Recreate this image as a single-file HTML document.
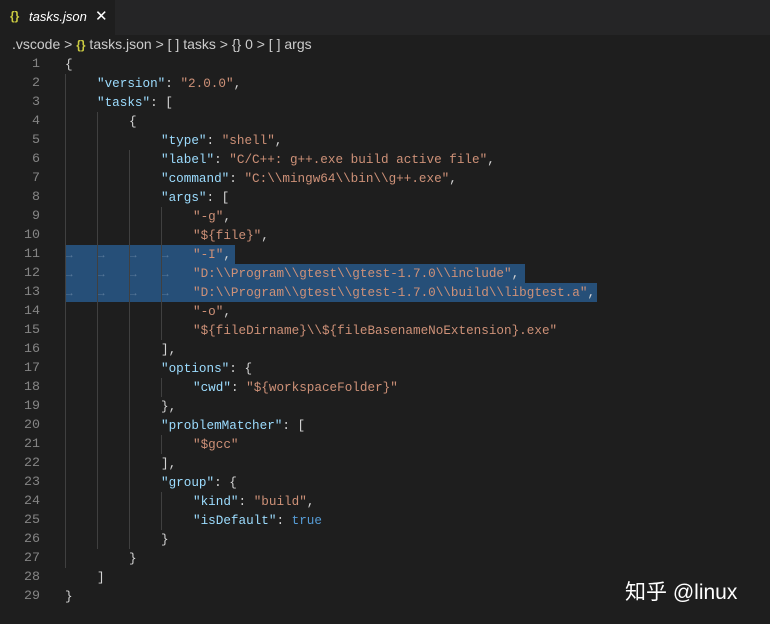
<!DOCTYPE html>
<html><head><meta charset="utf-8"><style>
body{margin:0;width:770px;height:624px;background:#1e1e1e;overflow:hidden;position:relative;font-family:"Liberation Mono",monospace}
.tabbar{position:absolute;left:0;top:0;width:770px;height:35px;background:#252526}
.tab{position:absolute;left:0;top:0;width:115px;height:35px;background:#1e1e1e;font-family:"Liberation Sans",sans-serif;font-size:13px;color:#fff;font-style:italic}
.bc{position:absolute;left:12px;top:36px;font-family:"Liberation Sans",sans-serif;font-size:14px;color:#ccc;white-space:pre}
.ln{position:absolute;left:0;width:40px;text-align:right;color:#858585;font-size:13.33px;line-height:19px}
.code{position:absolute;left:65px;top:55px;font-size:12.65px;line-height:19px;color:#d4d4d4}
.code div{height:19px;white-space:pre}
.i1{padding-left:32px}.i2{padding-left:64px}.i3{padding-left:96px}.i4{padding-left:128px}
.k{color:#9cdcfe}.s{color:#ce9178}.b{color:#569cd6}
.g{position:absolute;width:1px;background:#404040}
.sel{position:absolute;background:#264f78}
.ar{position:absolute;color:#5a7a9a;font-size:11px}
.wm{position:absolute;left:625px;top:576px;font-family:"Liberation Sans","Noto Sans CJK SC",sans-serif;font-size:21px;color:#fff}
</style></head><body>
<div class="tabbar"><div class="tab"><span style="position:absolute;left:10px;top:9px;color:#cbcb41;font-style:normal;font-weight:bold;font-size:12px">{}</span><span style="position:absolute;left:29px;top:9px">tasks.json</span><span style="position:absolute;left:95px;top:7px;font-style:normal;font-size:15px">✕</span></div></div>
<div class="bc">.vscode &gt; <span style="color:#cbcb41;font-weight:bold;font-size:12px">{}</span> tasks.json &gt; [ ] tasks &gt; {} 0 &gt; [ ] args</div>
<div class="sel" style="left:65px;top:245px;width:170px;height:19px"></div>
<div class="sel" style="left:65px;top:264px;width:460px;height:19px"></div>
<div class="sel" style="left:65px;top:283px;width:532px;height:19px"></div>
<div class="g" style="left:65px;top:74px;height:494px"></div>
<div class="g" style="left:97px;top:112px;height:437px"></div>
<div class="g" style="left:129px;top:150px;height:399px"></div>
<div class="g" style="left:161px;top:207px;height:133px"></div>
<div class="g" style="left:161px;top:378px;height:19px"></div>
<div class="g" style="left:161px;top:435px;height:19px"></div>
<div class="g" style="left:161px;top:492px;height:38px"></div>
<div class="ar" style="left:66px;top:247px;line-height:19px">→<br>→<br>→</div>
<div class="ar" style="left:98px;top:247px;line-height:19px">→<br>→<br>→</div>
<div class="ar" style="left:130px;top:247px;line-height:19px">→<br>→<br>→</div>
<div class="ar" style="left:162px;top:247px;line-height:19px">→<br>→<br>→</div>
<div class="ln" style="top:55px">1<br>2<br>3<br>4<br>5<br>6<br>7<br>8<br>9<br>10<br>11<br>12<br>13<br>14<br>15<br>16<br>17<br>18<br>19<br>20<br>21<br>22<br>23<br>24<br>25<br>26<br>27<br>28<br>29</div>
<div class="code"><div>{</div><div class="i1"><span class="k">"version"</span>: <span class="s">"2.0.0"</span>,</div><div class="i1"><span class="k">"tasks"</span>: [</div><div class="i2">{</div><div class="i3"><span class="k">"type"</span>: <span class="s">"shell"</span>,</div><div class="i3"><span class="k">"label"</span>: <span class="s">"C/C++: g++.exe build active file"</span>,</div><div class="i3"><span class="k">"command"</span>: <span class="s">"C:\\mingw64\\bin\\g++.exe"</span>,</div><div class="i3"><span class="k">"args"</span>: [</div><div class="i4"><span class="s">"-g"</span>,</div><div class="i4"><span class="s">"${file}"</span>,</div><div class="i4"><span class="s">"-I"</span>,</div><div class="i4"><span class="s">"D:\\Program\\gtest\\gtest-1.7.0\\include"</span>,</div><div class="i4"><span class="s">"D:\\Program\\gtest\\gtest-1.7.0\\build\\libgtest.a"</span>,</div><div class="i4"><span class="s">"-o"</span>,</div><div class="i4"><span class="s">"${fileDirname}\\${fileBasenameNoExtension}.exe"</span></div><div class="i3">],</div><div class="i3"><span class="k">"options"</span>: {</div><div class="i4"><span class="k">"cwd"</span>: <span class="s">"${workspaceFolder}"</span></div><div class="i3">},</div><div class="i3"><span class="k">"problemMatcher"</span>: [</div><div class="i4"><span class="s">"$gcc"</span></div><div class="i3">],</div><div class="i3"><span class="k">"group"</span>: {</div><div class="i4"><span class="k">"kind"</span>: <span class="s">"build"</span>,</div><div class="i4"><span class="k">"isDefault"</span>: <span class="b">true</span></div><div class="i3">}</div><div class="i2">}</div><div class="i1">]</div><div>}</div></div>
<div class="wm">知乎 @linux</div>
</body></html>
